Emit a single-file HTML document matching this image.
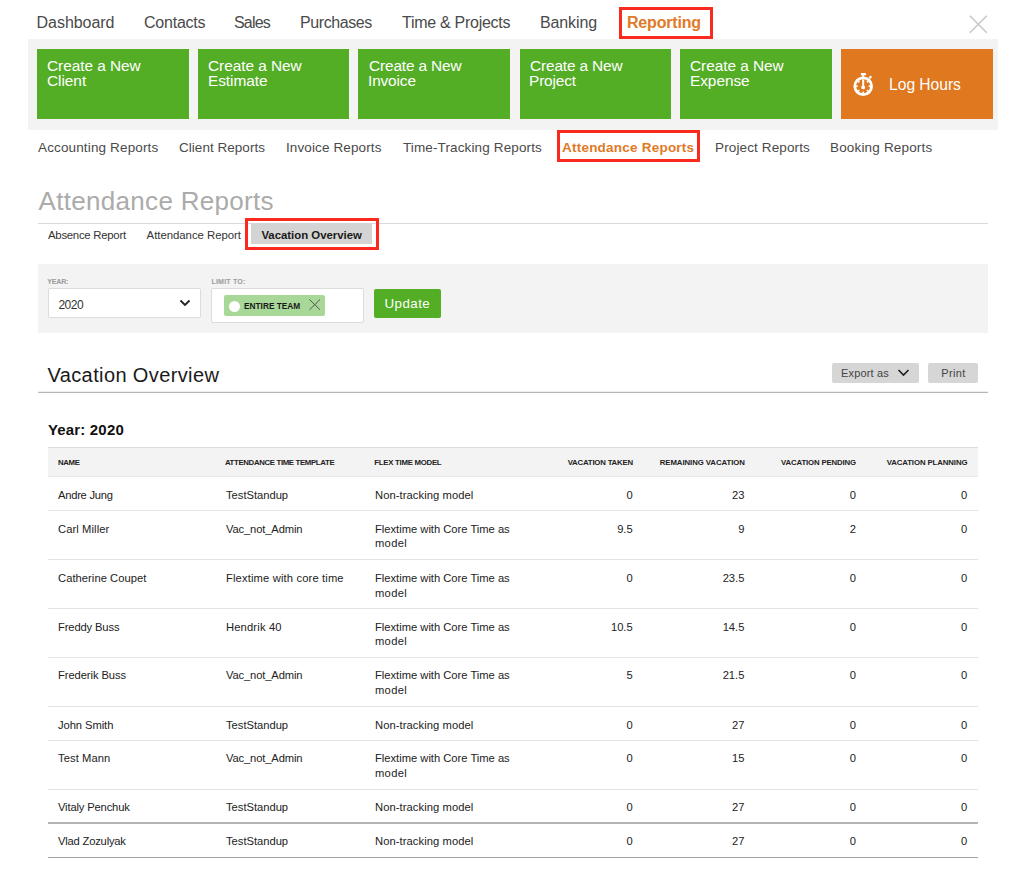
<!DOCTYPE html>
<html><head><meta charset="utf-8">
<style>
*{margin:0;padding:0;box-sizing:border-box}
html,body{width:1024px;height:884px;overflow:hidden;background:#fff;font-family:"Liberation Sans",sans-serif;color:#333}
.a{position:absolute;white-space:nowrap}
.rb{position:absolute;border:3px solid #fb2a1e}
.td{position:absolute;white-space:nowrap;font-size:11.2px;line-height:15px;color:#222;letter-spacing:0px}
</style></head><body>

<div class="a" style="left:28px;top:39px;width:970px;height:90.5px;background:#f3f3f3"></div>
<div class="a" style="left:37px;top:49px;width:152px;height:70px;background:#53ad25"></div>
<div class="a" style="left:198px;top:49px;width:151px;height:70px;background:#53ad25"></div>
<div class="a" style="left:358px;top:49px;width:152px;height:70px;background:#53ad25"></div>
<div class="a" style="left:520px;top:49px;width:151px;height:70px;background:#53ad25"></div>
<div class="a" style="left:680px;top:49px;width:152px;height:70px;background:#53ad25"></div>
<div class="a" style="left:841px;top:49px;width:152px;height:70px;background:#e07820"></div>
<svg class="a" style="left:848px;top:68px" width="32" height="32" viewBox="0 0 32 32"><circle cx="15.2" cy="18.2" r="8.4" fill="none" stroke="#fff" stroke-width="2.8"/><path d="M19.02 14.38L20.43 12.97" stroke="#fff" stroke-width="1.7"/><path d="M20.60 18.20L22.60 18.20" stroke="#fff" stroke-width="1.7"/><path d="M19.02 22.02L20.43 23.43" stroke="#fff" stroke-width="1.7"/><path d="M15.20 23.60L15.20 25.60" stroke="#fff" stroke-width="1.7"/><path d="M11.38 22.02L9.97 23.43" stroke="#fff" stroke-width="1.7"/><path d="M9.80 18.20L7.80 18.20" stroke="#fff" stroke-width="1.7"/><path d="M11.38 14.38L9.97 12.97" stroke="#fff" stroke-width="1.7"/><rect x="12.9" y="5" width="5" height="2.3" fill="#fff"/><rect x="14.2" y="6.5" width="2" height="3.5" fill="#fff"/><path d="M21.3 10.2L23.3 8.2" stroke="#fff" stroke-width="2.3"/><path d="M15.2 11.4V19" stroke="#fff" stroke-width="2"/><circle cx="15.2" cy="19.4" r="1.9" fill="#fff"/></svg>
<div class="rb" style="left:619px;top:7px;width:94px;height:32px"></div>
<svg class="a" style="left:969px;top:15px" width="19" height="19" viewBox="0 0 19 19"><path d="M0.8 0.8L17.8 17.8M17.8 0.8L0.8 17.8" stroke="#c8c8c8" stroke-width="1.6" fill="none"/></svg>
<div class="rb" style="left:557px;top:130px;width:143px;height:32px"></div>
<div class="a" style="left:38px;top:223px;width:950px;height:1px;background:#d9d9d9"></div>
<div class="a" style="left:251px;top:223px;width:121px;height:21px;background:#d4d4d4"></div>
<div class="rb" style="left:245px;top:218px;width:134px;height:32px"></div>
<div class="a" style="left:38px;top:264px;width:950px;height:69px;background:#f3f3f3"></div>
<div class="a" style="left:48px;top:288px;width:153px;height:30px;background:#fff;border:1px solid #dcdcdc;border-radius:2px"></div>
<svg class="a" style="left:179px;top:299px" width="12" height="8" viewBox="0 0 12 8"><path d="M1.5 1.5L6 6L10.5 1.5" stroke="#222" stroke-width="1.8" fill="none"/></svg>
<div class="a" style="left:211px;top:288px;width:153px;height:35px;background:#fff;border:1px solid #dcdcdc;border-radius:2px"></div>
<div class="a" style="left:224px;top:295px;width:101px;height:21px;background:#a8d898;border-radius:2px"></div>
<div class="a" style="left:229px;top:301px;width:11px;height:11px;background:#fff;border-radius:50%"></div>
<svg class="a" style="left:309px;top:299px" width="12" height="12" viewBox="0 0 12 12"><path d="M0.5 0.5L11 10.8M11 0.5L0.5 10.8" stroke="#555" stroke-width="1" fill="none"/></svg>
<div class="a" style="left:374px;top:289px;width:67px;height:29px;background:#53ad25;border-radius:2px"></div>
<div class="a" style="left:832px;top:363px;width:87px;height:20px;background:#d6d6d6;border-radius:2px"></div>
<svg class="a" style="left:897px;top:368px" width="13" height="9" viewBox="0 0 13 9"><path d="M1.5 2L6.5 7L11.5 2" stroke="#222" stroke-width="1.7" fill="none"/></svg>
<div class="a" style="left:928px;top:363px;width:50px;height:20px;background:#d6d6d6;border-radius:2px"></div>
<div class="a" style="left:38px;top:391px;width:950px;height:1px;background:#efefef"></div><div class="a" style="left:38px;top:392px;width:950px;height:1px;background:#b6b6b6"></div>
<div class="a" style="left:48px;top:447px;width:930px;height:1px;background:#dcdcdc"></div>
<div class="a" style="left:48px;top:448px;width:930px;height:28px;background:#f3f3f3"></div>
<div class="a" style="left:48px;top:476px;width:930px;height:1px;background:#e8e8e8"></div>
<div class="a" style="left:48px;top:510px;width:930px;height:1px;background:#e3e3e3"></div>
<div class="a" style="left:48px;top:559px;width:930px;height:1px;background:#e3e3e3"></div>
<div class="a" style="left:48px;top:608px;width:930px;height:1px;background:#e3e3e3"></div>
<div class="a" style="left:48px;top:657px;width:930px;height:1px;background:#e3e3e3"></div>
<div class="a" style="left:48px;top:706px;width:930px;height:1px;background:#e3e3e3"></div>
<div class="a" style="left:48px;top:740px;width:930px;height:1px;background:#e3e3e3"></div>
<div class="a" style="left:48px;top:789px;width:930px;height:1px;background:#e3e3e3"></div>
<div class="a" style="left:48px;top:822px;width:930px;height:2px;background:#b4b4b4"></div>
<div class="a" style="left:48px;top:857px;width:930px;height:1px;background:#a4a4a4"></div>
<div class="a" id="n1" style="font-size:16px;line-height:20px;color:#4a4a4a;font-weight:normal;letter-spacing:-0.050px;left:36.60px;top:12.90px;">Dashboard</div>
<div class="a" id="n2" style="font-size:16px;line-height:20px;color:#4a4a4a;font-weight:normal;letter-spacing:-0.229px;left:144.00px;top:12.90px;">Contacts</div>
<div class="a" id="n3" style="font-size:16px;line-height:20px;color:#4a4a4a;font-weight:normal;letter-spacing:-0.800px;left:234.00px;top:12.90px;">Sales</div>
<div class="a" id="n4" style="font-size:16px;line-height:20px;color:#4a4a4a;font-weight:normal;letter-spacing:-0.412px;left:300.00px;top:12.90px;">Purchases</div>
<div class="a" id="n5" style="font-size:16px;line-height:20px;color:#4a4a4a;font-weight:normal;letter-spacing:-0.279px;left:402.00px;top:12.90px;">Time &amp; Projects</div>
<div class="a" id="n6" style="font-size:16px;line-height:20px;color:#4a4a4a;font-weight:normal;letter-spacing:-0.117px;left:540.00px;top:12.90px;">Banking</div>
<div class="a" id="n7" style="font-size:16px;line-height:20px;color:#e07a26;font-weight:bold;letter-spacing:-0.188px;left:627.00px;top:12.90px;">Reporting</div>
<div class="a" id="c1a" style="font-size:15.4px;line-height:15px;color:#fff;font-weight:normal;letter-spacing:-0.036px;left:47.00px;top:57.70px;">Create a New</div>
<div class="a" id="c1b" style="font-size:15.4px;line-height:15px;color:#fff;font-weight:normal;letter-spacing:-0.036px;left:47.00px;top:72.50px;">Client</div>
<div class="a" id="c2a" style="font-size:15.4px;line-height:15px;color:#fff;font-weight:normal;letter-spacing:-0.045px;left:208.00px;top:57.70px;">Create a New</div>
<div class="a" id="c2b" style="font-size:15.4px;line-height:15px;color:#fff;font-weight:normal;letter-spacing:-0.045px;left:208.00px;top:72.50px;">Estimate</div>
<div class="a" id="c3a" style="font-size:15.4px;line-height:15px;color:#fff;font-weight:normal;letter-spacing:-0.136px;left:369.00px;top:57.70px;">Create a New</div>
<div class="a" id="c3b" style="font-size:15.4px;line-height:15px;color:#fff;font-weight:normal;letter-spacing:-0.136px;left:368.00px;top:72.50px;">Invoice</div>
<div class="a" id="c4a" style="font-size:15.4px;line-height:15px;color:#fff;font-weight:normal;letter-spacing:-0.136px;left:530.00px;top:57.70px;">Create a New</div>
<div class="a" id="c4b" style="font-size:15.4px;line-height:15px;color:#fff;font-weight:normal;letter-spacing:-0.136px;left:529.00px;top:72.50px;">Project</div>
<div class="a" id="c5a" style="font-size:15.4px;line-height:15px;color:#fff;font-weight:normal;letter-spacing:-0.045px;left:690.00px;top:57.70px;">Create a New</div>
<div class="a" id="c5b" style="font-size:15.4px;line-height:15px;color:#fff;font-weight:normal;letter-spacing:-0.045px;left:690.00px;top:72.50px;">Expense</div>
<div class="a" id="log" style="font-size:15.6px;line-height:20px;color:#fff;font-weight:normal;letter-spacing:-0.025px;left:889.10px;top:75.10px;">Log Hours</div>
<div class="a" id="s1" style="font-size:13.5px;line-height:17px;color:#4a4a4a;font-weight:normal;letter-spacing:0.141px;left:38.00px;top:138.90px;">Accounting Reports</div>
<div class="a" id="s2" style="font-size:13.5px;line-height:17px;color:#4a4a4a;font-weight:normal;letter-spacing:0.031px;left:179.00px;top:138.90px;">Client Reports</div>
<div class="a" id="s3" style="font-size:13.5px;line-height:17px;color:#4a4a4a;font-weight:normal;letter-spacing:0.114px;left:286.00px;top:138.90px;">Invoice Reports</div>
<div class="a" id="s4" style="font-size:13.5px;line-height:17px;color:#4a4a4a;font-weight:normal;letter-spacing:0.125px;left:403.00px;top:138.90px;">Time-Tracking Reports</div>
<div class="a" id="s6" style="font-size:13.5px;line-height:17px;color:#4a4a4a;font-weight:normal;letter-spacing:0.129px;left:715.00px;top:138.90px;">Project Reports</div>
<div class="a" id="s7" style="font-size:13.5px;line-height:17px;color:#4a4a4a;font-weight:normal;letter-spacing:0.171px;left:830.00px;top:138.90px;">Booking Reports</div>
<div class="a" id="s5" style="font-size:13.5px;line-height:17px;color:#e07a26;font-weight:bold;letter-spacing:0.224px;left:562.00px;top:138.90px;">Attendance Reports</div>
<div class="a" id="h1" style="font-size:26px;line-height:32px;color:#ababab;font-weight:normal;letter-spacing:0.312px;left:38.50px;top:184.60px;">Attendance Reports</div>
<div class="a" id="t1" style="font-size:11.4px;line-height:14px;color:#333;font-weight:normal;letter-spacing:-0.277px;left:48.00px;top:227.80px;">Absence Report</div>
<div class="a" id="t2" style="font-size:11.4px;line-height:14px;color:#333;font-weight:normal;letter-spacing:-0.038px;left:146.60px;top:227.80px;">Attendance Report</div>
<div class="a" id="t3" style="font-size:11.4px;line-height:14px;color:#1a1a1a;font-weight:bold;letter-spacing:-0.012px;left:261.40px;top:227.80px;">Vacation Overview</div>
<div class="a" id="l1" style="font-size:7.1px;line-height:9px;color:#9a9a9a;font-weight:bold;letter-spacing:-0.200px;left:47.20px;top:277.50px;">YEAR:</div>
<div class="a" id="l2" style="font-size:7.1px;line-height:9px;color:#9a9a9a;font-weight:bold;letter-spacing:0.150px;left:211.50px;top:277.50px;">LIMIT TO:</div>
<div class="a" id="y2020" style="font-size:12px;line-height:15px;color:#333;font-weight:normal;letter-spacing:-0.500px;left:58.40px;top:297.50px;">2020</div>
<div class="a" id="ent" style="font-size:9.4px;line-height:12px;color:#1a1a1a;font-weight:bold;letter-spacing:0.000px;left:244.40px;top:299.80px;transform:scaleX(0.8858);transform-origin:left top;">ENTIRE TEAM</div>
<div class="a" id="upd" style="font-size:13.3px;line-height:17px;color:#fff;font-weight:normal;letter-spacing:0.500px;left:384.40px;top:294.60px;">Update</div>
<div class="a" id="vo" style="font-size:20px;line-height:25px;color:#1a1a1a;font-weight:normal;letter-spacing:0.381px;left:47.50px;top:363.10px;">Vacation Overview</div>
<div class="a" id="exp" style="font-size:11px;line-height:14px;color:#444;font-weight:normal;letter-spacing:0.150px;left:841.00px;top:366.00px;">Export as</div>
<div class="a" id="prn" style="font-size:11px;line-height:14px;color:#444;font-weight:normal;letter-spacing:0.400px;left:941.20px;top:366.00px;">Print</div>
<div class="a" id="yr" style="font-size:15px;line-height:19px;color:#111;font-weight:bold;letter-spacing:0.167px;left:48.00px;top:420.40px;">Year: 2020</div>
<div class="a" id="th1" style="font-size:7.8px;line-height:10px;color:#222;font-weight:bold;letter-spacing:-0.333px;left:58.00px;top:457.70px;">NAME</div>
<div class="a" id="th2" style="font-size:7.8px;line-height:10px;color:#222;font-weight:bold;letter-spacing:-0.339px;left:224.90px;top:457.70px;">ATTENDANCE TIME TEMPLATE</div>
<div class="a" id="th3" style="font-size:7.8px;line-height:10px;color:#222;font-weight:bold;letter-spacing:-0.257px;left:374.20px;top:457.70px;">FLEX TIME MODEL</div>
<div class="a" id="th4" style="font-size:7.8px;line-height:10px;color:#222;font-weight:bold;letter-spacing:-0.200px;right:391.10px;top:457.70px;">VACATION TAKEN</div>
<div class="a" id="th5" style="font-size:7.8px;line-height:10px;color:#222;font-weight:bold;letter-spacing:-0.071px;right:279.20px;top:457.70px;">REMAINING VACATION</div>
<div class="a" id="th6" style="font-size:7.8px;line-height:10px;color:#222;font-weight:bold;letter-spacing:-0.147px;right:168.00px;top:457.70px;">VACATION PENDING</div>
<div class="a" id="th7" style="font-size:7.8px;line-height:10px;color:#222;font-weight:bold;letter-spacing:-0.100px;right:56.60px;top:457.70px;">VACATION PLANNING</div>
<div class="td" style="left:58.00px;top:487.80px;letter-spacing:-0.256px;">Andre Jung</div>
<div class="td" style="left:226.00px;top:487.80px;letter-spacing:-0.01px;">TestStandup</div>
<div class="td" style="left:375.00px;top:487.80px;letter-spacing:0.08px;">Non-tracking model</div>
<div class="td" style="right:391.30px;top:487.80px">0</div>
<div class="td" style="right:279.60px;top:487.80px">23</div>
<div class="td" style="right:168.00px;top:487.80px">0</div>
<div class="td" style="right:56.80px;top:487.80px">0</div>
<div class="td" style="left:58.00px;top:521.60px;letter-spacing:0.09px;">Carl Miller</div>
<div class="td" style="left:226.00px;top:521.60px;letter-spacing:-0.142px;">Vac_not_Admin</div>
<div class="td" style="left:375.00px;top:521.60px;letter-spacing:-0.008px;">Flextime with Core Time as</div>
<div class="td" style="left:375.00px;top:536.20px;letter-spacing:0.3px;">model</div>
<div class="td" style="right:391.30px;top:521.60px">9.5</div>
<div class="td" style="right:279.60px;top:521.60px">9</div>
<div class="td" style="right:168.00px;top:521.60px">2</div>
<div class="td" style="right:56.80px;top:521.60px">0</div>
<div class="td" style="left:58.00px;top:570.90px;letter-spacing:0.047px;">Catherine Coupet</div>
<div class="td" style="left:226.00px;top:570.90px;letter-spacing:0.145px;">Flextime with core time</div>
<div class="td" style="left:375.00px;top:570.90px;letter-spacing:-0.008px;">Flextime with Core Time as</div>
<div class="td" style="left:375.00px;top:585.50px;letter-spacing:0.3px;">model</div>
<div class="td" style="right:391.30px;top:570.90px">0</div>
<div class="td" style="right:279.60px;top:570.90px">23.5</div>
<div class="td" style="right:168.00px;top:570.90px">0</div>
<div class="td" style="right:56.80px;top:570.90px">0</div>
<div class="td" style="left:58.00px;top:619.50px;letter-spacing:-0.13px;">Freddy Buss</div>
<div class="td" style="left:226.00px;top:619.50px;letter-spacing:0.156px;">Hendrik 40</div>
<div class="td" style="left:375.00px;top:619.50px;letter-spacing:-0.008px;">Flextime with Core Time as</div>
<div class="td" style="left:375.00px;top:634.10px;letter-spacing:0.3px;">model</div>
<div class="td" style="right:391.30px;top:619.50px">10.5</div>
<div class="td" style="right:279.60px;top:619.50px">14.5</div>
<div class="td" style="right:168.00px;top:619.50px">0</div>
<div class="td" style="right:56.80px;top:619.50px">0</div>
<div class="td" style="left:58.00px;top:668.40px;letter-spacing:-0.075px;">Frederik Buss</div>
<div class="td" style="left:226.00px;top:668.40px;letter-spacing:-0.142px;">Vac_not_Admin</div>
<div class="td" style="left:375.00px;top:668.40px;letter-spacing:-0.008px;">Flextime with Core Time as</div>
<div class="td" style="left:375.00px;top:683.00px;letter-spacing:0.3px;">model</div>
<div class="td" style="right:391.30px;top:668.40px">5</div>
<div class="td" style="right:279.60px;top:668.40px">21.5</div>
<div class="td" style="right:168.00px;top:668.40px">0</div>
<div class="td" style="right:56.80px;top:668.40px">0</div>
<div class="td" style="left:58.00px;top:717.50px;letter-spacing:-0.067px;">John Smith</div>
<div class="td" style="left:226.00px;top:717.50px;letter-spacing:-0.01px;">TestStandup</div>
<div class="td" style="left:375.00px;top:717.50px;letter-spacing:0.08px;">Non-tracking model</div>
<div class="td" style="right:391.30px;top:717.50px">0</div>
<div class="td" style="right:279.60px;top:717.50px">27</div>
<div class="td" style="right:168.00px;top:717.50px">0</div>
<div class="td" style="right:56.80px;top:717.50px">0</div>
<div class="td" style="left:58.00px;top:751.40px;letter-spacing:0.075px;">Test Mann</div>
<div class="td" style="left:226.00px;top:751.40px;letter-spacing:-0.142px;">Vac_not_Admin</div>
<div class="td" style="left:375.00px;top:751.40px;letter-spacing:-0.008px;">Flextime with Core Time as</div>
<div class="td" style="left:375.00px;top:766.00px;letter-spacing:0.3px;">model</div>
<div class="td" style="right:391.30px;top:751.40px">0</div>
<div class="td" style="right:279.60px;top:751.40px">15</div>
<div class="td" style="right:168.00px;top:751.40px">0</div>
<div class="td" style="right:56.80px;top:751.40px">0</div>
<div class="td" style="left:58.00px;top:800.40px;letter-spacing:-0.154px;">Vitaly Penchuk</div>
<div class="td" style="left:226.00px;top:800.40px;letter-spacing:-0.01px;">TestStandup</div>
<div class="td" style="left:375.00px;top:800.40px;letter-spacing:0.08px;">Non-tracking model</div>
<div class="td" style="right:391.30px;top:800.40px">0</div>
<div class="td" style="right:279.60px;top:800.40px">27</div>
<div class="td" style="right:168.00px;top:800.40px">0</div>
<div class="td" style="right:56.80px;top:800.40px">0</div>
<div class="td" style="left:58.00px;top:834.20px;letter-spacing:-0.192px;">Vlad Zozulyak</div>
<div class="td" style="left:226.00px;top:834.20px;letter-spacing:-0.01px;">TestStandup</div>
<div class="td" style="left:375.00px;top:834.20px;letter-spacing:0.08px;">Non-tracking model</div>
<div class="td" style="right:391.30px;top:834.20px">0</div>
<div class="td" style="right:279.60px;top:834.20px">27</div>
<div class="td" style="right:168.00px;top:834.20px">0</div>
<div class="td" style="right:56.80px;top:834.20px">0</div>
</body></html>
